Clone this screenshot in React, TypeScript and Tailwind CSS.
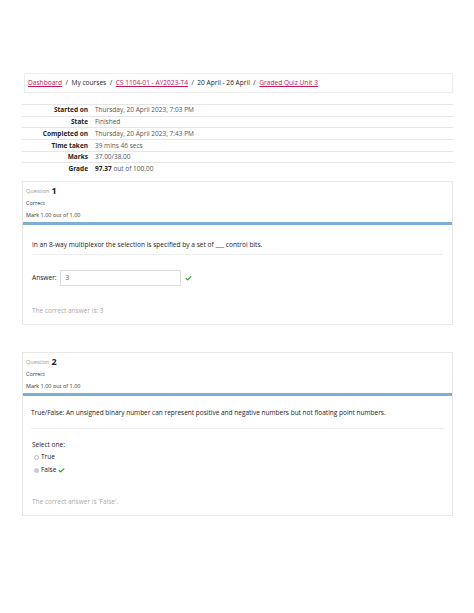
import { Check } from 'lucide-react';

const SUMMARY: [string, React.ReactNode][] = [
  ['Started on', 'Thursday, 20 April 2023, 7:03 PM'],
  ['State', 'Finished'],
  ['Completed on', 'Thursday, 20 April 2023, 7:43 PM'],
  ['Time taken', '39 mins 46 secs'],
  ['Marks', '37.00/38.00'],
  [
    'Grade',
    <>
      <b className="font-bold text-[#222]">97.37</b> out of 100.00
    </>,
  ],
];

function QuestionInfo({ num }: { num: number }) {
  return (
    <div className="px-[3px] pt-[3px] pb-[2px] text-[5.5px] text-[#333]">
      <div className="h-[12px] flex items-center gap-[2px]">
        <span className="text-[#999]">Question</span>
        <span className="text-[9px] font-bold text-[#1d2125]">{num}</span>
      </div>
      <div className="h-[12px] flex items-center">Correct</div>
      <div className="h-[11px] flex items-center">Mark 1.00 out of 1.00</div>
    </div>
  );
}

function GreenCheck() {
  return <Check className="w-[7px] h-[7px] text-[#2ea42e]" strokeWidth={4} />;
}

export default function App() {
  return (
    <div className="min-h-[613px] bg-white pt-[73px] pl-[22px] pr-[21px] font-['Open_Sans',sans-serif] text-[#1d2125]">
      {/* Breadcrumb */}
      <div className="ml-[2px] h-[20px] border border-[#eeeeee] flex items-center px-[3px] text-[6.6px] gap-[3.5px]">
        <a className="text-[#c2185b] underline">Dashboard</a>
        <span>/</span>
        <span>My courses</span>
        <span>/</span>
        <a className="text-[#c2185b] underline">CS 1104-01 - AY2023-T4</a>
        <span>/</span>
        <span>20 April - 26 April</span>
        <span>/</span>
        <a className="text-[#c2185b] underline">Graded Quiz Unit 3</a>
      </div>

      {/* Summary table */}
      <div className="mt-[11px] text-[6.5px]">
        {SUMMARY.map(([label, value]) => (
          <div key={label} className="flex h-[11.7px] items-center border-t border-[#e6e6e6]">
            <div className="w-[66px] text-right font-bold text-[#1d2125]">{label}</div>
            <div className="pl-[7px] text-[#555]">{value}</div>
          </div>
        ))}
      </div>

      {/* Question 1 */}
      <div className="mt-[7px] border border-[#e8e8e8]">
        <QuestionInfo num={1} />
        <div className="h-[3px] bg-[#7eaed4]" />
        <div className="px-[9px] pt-[15px] pb-[8px] text-[6.6px] leading-[10px]">
          <p className="pb-[4px] border-b border-[#eeeeee]">
            In an 8-way multiplexor the selection is specified by a set of ___ control bits.
          </p>
          <div className="mt-[15px] flex items-center">
            <span className="mr-[3px]">Answer:</span>
            <div className="w-[121px] h-[16px] border border-[#dddddd] flex items-center px-[5px] text-[#555]">
              3
            </div>
            <span className="ml-[4px]">
              <GreenCheck />
            </span>
          </div>
          <p className="mt-[20px] text-[#aaaaaa] text-[6.5px]">The correct answer is: 3</p>
        </div>
      </div>

      {/* Question 2 */}
      <div className="mt-[27px] border border-[#e8e8e8]">
        <QuestionInfo num={2} />
        <div className="h-[3px] bg-[#7eaed4]" />
        <div className="px-[8px] pt-[12px] pb-[8px] text-[6.5px] leading-[10px]">
          <p className="pb-[10px] border-b border-[#eeeeee]">
            True/False: An unsigned binary number can represent positive and negative numbers but not floating point
            numbers.
          </p>
          <div className="mt-[11px] pl-[1px]">
            <p>Select one:</p>
            <div className="mt-[2px] flex items-center gap-[2px] pl-[2px]">
              <span className="w-[5px] h-[5px] rounded-full border border-[#bbbbbb]" />
              <span>True</span>
            </div>
            <div className="mt-[3px] flex items-center gap-[2px] pl-[2px]">
              <span className="w-[5px] h-[5px] rounded-full bg-[#cccccc]" />
              <span>False</span>
              <GreenCheck />
            </div>
          </div>
          <p className="mt-[22px] pl-[1px] text-[#aaaaaa]">The correct answer is 'False'.</p>
        </div>
      </div>
    </div>
  );
}
